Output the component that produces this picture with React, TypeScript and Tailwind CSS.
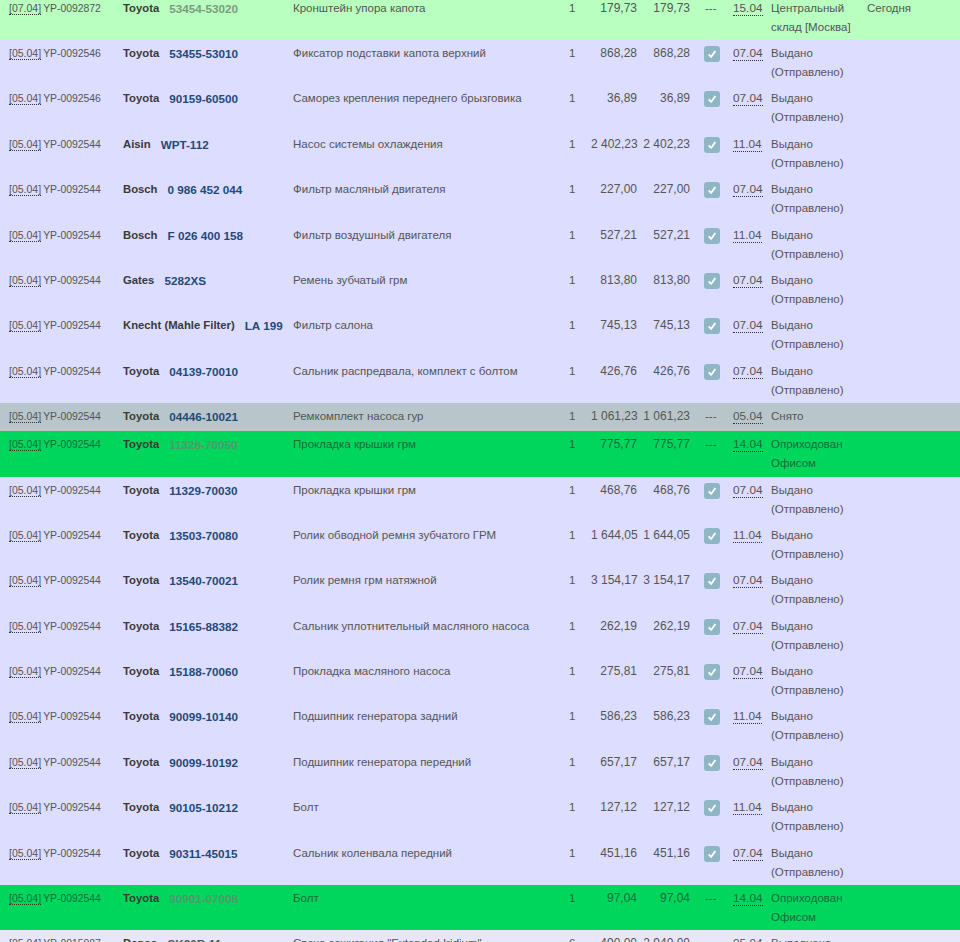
type Row = {
  d: string;
  yp: string;
  brand: string;
  part: string;
  name: string;
  qty: string;
  price: string;
  sum: string;
  date: string;
  status: [string, string?];
  kind?: "new" | "removed" | "stock" | "next";
  extra?: string;
};

const done: [string, string] = ["Выдано", "(Отправлено)"];
const stock: [string, string] = ["Оприходован", "Офисом"];

const rows: Row[] = [
  { d: "07.04", yp: "YP-0092872", brand: "Toyota", part: "53454-53020", name: "Кронштейн упора капота", qty: "1", price: "179,73", sum: "179,73", date: "15.04", status: ["Центральный", "склад [Москва]"], kind: "new", extra: "Сегодня" },
  { d: "05.04", yp: "YP-0092546", brand: "Toyota", part: "53455-53010", name: "Фиксатор подставки капота верхний", qty: "1", price: "868,28", sum: "868,28", date: "07.04", status: done },
  { d: "05.04", yp: "YP-0092546", brand: "Toyota", part: "90159-60500", name: "Саморез крепления переднего брызговика", qty: "1", price: "36,89", sum: "36,89", date: "07.04", status: done },
  { d: "05.04", yp: "YP-0092544", brand: "Aisin", part: "WPT-112", name: "Насос системы охлаждения", qty: "1", price: "2 402,23", sum: "2 402,23", date: "11.04", status: done },
  { d: "05.04", yp: "YP-0092544", brand: "Bosch", part: "0 986 452 044", name: "Фильтр масляный двигателя", qty: "1", price: "227,00", sum: "227,00", date: "07.04", status: done },
  { d: "05.04", yp: "YP-0092544", brand: "Bosch", part: "F 026 400 158", name: "Фильтр воздушный двигателя", qty: "1", price: "527,21", sum: "527,21", date: "11.04", status: done },
  { d: "05.04", yp: "YP-0092544", brand: "Gates", part: "5282XS", name: "Ремень зубчатый грм", qty: "1", price: "813,80", sum: "813,80", date: "07.04", status: done },
  { d: "05.04", yp: "YP-0092544", brand: "Knecht (Mahle Filter)", part: "LA 199", name: "Фильтр салона", qty: "1", price: "745,13", sum: "745,13", date: "07.04", status: done },
  { d: "05.04", yp: "YP-0092544", brand: "Toyota", part: "04139-70010", name: "Сальник распредвала, комплект с болтом", qty: "1", price: "426,76", sum: "426,76", date: "07.04", status: done },
  { d: "05.04", yp: "YP-0092544", brand: "Toyota", part: "04446-10021", name: "Ремкомплект насоса гур", qty: "1", price: "1 061,23", sum: "1 061,23", date: "05.04", status: ["Снято"], kind: "removed" },
  { d: "05.04", yp: "YP-0092544", brand: "Toyota", part: "11328-70050", name: "Прокладка крышки грм", qty: "1", price: "775,77", sum: "775,77", date: "14.04", status: stock, kind: "stock" },
  { d: "05.04", yp: "YP-0092544", brand: "Toyota", part: "11329-70030", name: "Прокладка крышки грм", qty: "1", price: "468,76", sum: "468,76", date: "07.04", status: done },
  { d: "05.04", yp: "YP-0092544", brand: "Toyota", part: "13503-70080", name: "Ролик обводной ремня зубчатого ГРМ", qty: "1", price: "1 644,05", sum: "1 644,05", date: "11.04", status: done },
  { d: "05.04", yp: "YP-0092544", brand: "Toyota", part: "13540-70021", name: "Ролик ремня грм натяжной", qty: "1", price: "3 154,17", sum: "3 154,17", date: "07.04", status: done },
  { d: "05.04", yp: "YP-0092544", brand: "Toyota", part: "15165-88382", name: "Сальник уплотнительный масляного насоса", qty: "1", price: "262,19", sum: "262,19", date: "07.04", status: done },
  { d: "05.04", yp: "YP-0092544", brand: "Toyota", part: "15188-70060", name: "Прокладка масляного насоса", qty: "1", price: "275,81", sum: "275,81", date: "07.04", status: done },
  { d: "05.04", yp: "YP-0092544", brand: "Toyota", part: "90099-10140", name: "Подшипник генератора задний", qty: "1", price: "586,23", sum: "586,23", date: "11.04", status: done },
  { d: "05.04", yp: "YP-0092544", brand: "Toyota", part: "90099-10192", name: "Подшипник генератора передний", qty: "1", price: "657,17", sum: "657,17", date: "07.04", status: done },
  { d: "05.04", yp: "YP-0092544", brand: "Toyota", part: "90105-10212", name: "Болт", qty: "1", price: "127,12", sum: "127,12", date: "11.04", status: done },
  { d: "05.04", yp: "YP-0092544", brand: "Toyota", part: "90311-45015", name: "Сальник коленвала передний", qty: "1", price: "451,16", sum: "451,16", date: "07.04", status: done },
  { d: "05.04", yp: "YP-0092544", brand: "Toyota", part: "90901-07008", name: "Болт", qty: "1", price: "97,04", sum: "97,04", date: "14.04", status: stock, kind: "stock" },
  { d: "05.04", yp: "YP-0015987", brand: "Denso", part: "SK20R-11", name: "Свеча зажигания \"Extended Iridium\"", qty: "6", price: "490,00", sum: "2 940,00", date: "05.04", status: ["Выполнена"], kind: "next" },
];

const rowBg = {
  new: "bg-[#b8ffc0]",
  removed: "bg-[#b8c6cc]",
  stock: "bg-[#00d65c]",
  next: "bg-[#e9e6fb]",
};

const App = () => {
  return (
    <div className="h-[942px] overflow-hidden bg-[#ddddff] font-['Liberation_Sans',Arial,sans-serif] text-[11.5px] leading-[19px] text-[#555]">
      {rows.map((r, i) => {
        const noCheck = r.kind !== undefined;
        const textColor = r.kind === "stock" ? "text-[#1d6b3e]" : "";
        return (
          <div
            key={i}
            className={`grid grid-cols-[123px_170px_276px_22px_46px_53px_43px_38px_96px_1fr] pt-[4px] ${r.kind === "removed" ? "h-[28px]" : "h-[45.4px]"} ${i === 0 ? "-mt-[5.4px]" : ""} ${r.kind ? rowBg[r.kind] : ""} ${textColor}`}
          >
            <div className="pl-[9px] whitespace-nowrap">
              <span className="border-b border-dotted border-[#333] text-[10.5px]">[{r.d}]</span>
              <span className="ml-[2px] text-[10.4px]">{r.yp}</span>
            </div>
            <div className="flex gap-[10px] font-bold whitespace-nowrap">
              <span className="text-[11.3px] text-[#3a3a3a]">{r.brand}</span>
              <span className={`text-[11.7px] ${r.kind === "stock" ? "text-[#4f9a6c]" : r.kind === "new" ? "text-[#7c9a82]" : r.kind === "next" ? "text-[#555]" : "text-[#1f4a7a]"}`}>
                {r.part}
              </span>
            </div>
            <div className="whitespace-nowrap">{r.name}</div>
            <div>{r.qty}</div>
            <div className="text-right whitespace-nowrap text-[12px]">{r.price}</div>
            <div className="text-right whitespace-nowrap text-[12px]">{r.sum}</div>
            <div className="pl-[15px]">
              {noCheck ? (
                <span>---</span>
              ) : (
                <span className="mt-[2px] -ml-[1px] flex h-[16px] w-[16px] items-center justify-center rounded-[3px] bg-[#8fb6c5]">
                  <svg viewBox="0 0 12 12" className="h-[10px] w-[10px]" fill="none" stroke="#fff" strokeWidth="2.2">
                    <path d="M2 6.5 5 9.5 10 2.5" />
                  </svg>
                </span>
              )}
            </div>
            <div>
              <span className="border-b border-dotted border-[#333] text-[11.8px]">{r.date}</span>
            </div>
            <div className="flex flex-col">
              {r.status.map((s) => (
                <span key={s} className="whitespace-nowrap">{s}</span>
              ))}
            </div>
            <div>{r.extra}</div>
          </div>
        );
      })}
    </div>
  );
};

export default App;
